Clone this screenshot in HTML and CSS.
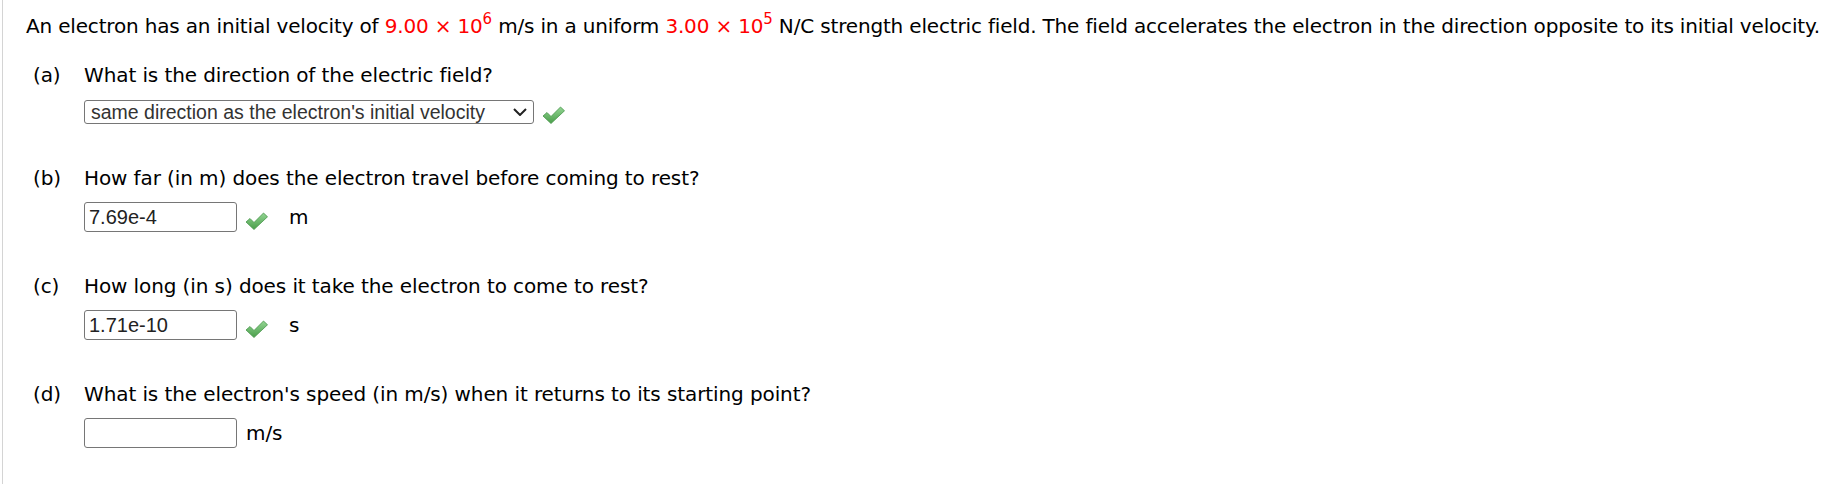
FILE: index.html
```html
<!DOCTYPE html>
<html>
	<head>
	<meta charset="utf-8">
	<link rel="stylesheet" href="styles.css">
	</head>

	<body>
		<div class="question">

			<p class="stem">An electron has an initial velocity of <span class="given">9.00 &times; 10<sup>6</sup></span> m/s in a uniform <span class="given">3.00 &times; 10<sup>5</sup></span> N/C strength electric field. The field accelerates the electron in the direction opposite to its initial velocity.</p>

			<!-- part a -->
			<div class="part part-first">
				<div class="part-label">(a)</div>
				<div class="part-body">
					<p class="prompt">What is the direction of the electric field?</p>
					<div class="answer">
						<span class="dropdown">
							<select name="direction">
								<option>same direction as the electron's initial velocity</option>
								<option>opposite direction to the electron's initial velocity</option>
							</select>
							<svg class="chevron" width="14" height="8" viewBox="0 0 14 8"><path d="M1 1 L7 7 L13 1" fill="none" stroke="#222" stroke-width="2"/></svg>
						</span>
						<svg class="check" width="23" height="18" viewBox="0 0 23 18"><use href="#tick"/></svg>
					</div>
				</div>
			</div>

			<!-- part b -->
			<div class="part">
				<div class="part-label">(b)</div>
				<div class="part-body">
					<p class="prompt">How far (in m) does the electron travel before coming to rest?</p>
					<div class="answer">
						<input type="text" class="field" value="7.69e-4">
						<svg class="check" width="23" height="18" viewBox="0 0 23 18"><use href="#tick"/></svg>
						<span class="unit unit-checked">m</span>
					</div>
				</div>
			</div>

			<!-- part c -->
			<div class="part">
				<div class="part-label">(c)</div>
				<div class="part-body">
					<p class="prompt">How long (in s) does it take the electron to come to rest?</p>
					<div class="answer">
						<input type="text" class="field" value="1.71e-10">
						<svg class="check" width="23" height="18" viewBox="0 0 23 18"><use href="#tick"/></svg>
						<span class="unit unit-checked">s</span>
					</div>
				</div>
			</div>

			<!-- part d -->
			<div class="part">
				<div class="part-label">(d)</div>
				<div class="part-body">
					<p class="prompt">What is the electron's speed (in m/s) when it returns to its starting point?</p>
					<div class="answer">
						<input type="text" class="field" value="">
						<span class="unit">m/s</span>
					</div>
				</div>
			</div>

		</div>

		<svg width="0" height="0" class="defs">
			<defs>
				<linearGradient id="tickFill" x1="0" y1="0" x2="0" y2="1">
					<stop offset="0" stop-color="#93d593"/>
					<stop offset="1" stop-color="#4a9e4a"/>
				</linearGradient>
				<path id="tick" d="M1 10 L5 6.5 L9 10.5 L18.5 1 L22.5 4.8 L9 17.5 Z" fill="url(#tickFill)" stroke="#46964a" stroke-width="0.8" stroke-linejoin="round"/>
			</defs>
		</svg>
	</body>
</html>
```

FILE: styles.css
```css
body, html {
	height: 100%;
	min-height: 100%;
}

body {
	margin: 0;
	padding: 0;
	background: #fff;
}

.question {
	margin-left: 2px;
	min-height: 100%;
	border-left: 1px solid #d4d4d4;
	padding: 14px 0 0 23px;
	font-family: "DejaVu Sans", Verdana, sans-serif;
	font-size: 20px;
	line-height: 24px;
	letter-spacing: -0.1px;
	color: #000;
	box-sizing: border-box;
}

p {
	margin: 0;
	padding: 0;
}

.stem {
	white-space: nowrap;
	letter-spacing: -0.17px;
}

.given {
	color: #f00;
}

sup {
	font-size: 15px;
	line-height: 0;
	vertical-align: 9px;
}

.part {
	display: flex;
	margin: 42px 0 0 7px;
}

.part-first {
	margin-top: 25px;
}

.part-label {
	width: 51px;
	flex-shrink: 0;
}

.prompt {
	margin-bottom: 12px;
}

.answer {
	display: flex;
	align-items: center;
	height: 30px;
}

.part-first .answer {
	height: 25px;
}

.dropdown {
	display: inline-flex;
	align-items: center;
	width: 450px;
	height: 24px;
	border: 1px solid #767676;
	border-radius: 3px;
	box-sizing: border-box;
	background: #fff;
}

.dropdown select {
	flex: 1;
	appearance: none;
	-webkit-appearance: none;
	border: none;
	outline: none;
	background: transparent;
	padding: 0 0 0 6px;
	margin: 0;
	height: 22px;
	font-family: "Liberation Sans", Arial, sans-serif;
	font-size: 19.5px;
	letter-spacing: 0;
	color: #333;
}

.chevron {
	margin-right: 6px;
}

.check {
	margin: 7px 0 0 8px;
	flex-shrink: 0;
}

.field {
	width: 153px;
	height: 30px;
	box-sizing: border-box;
	border: 1px solid #767676;
	border-radius: 3px;
	padding: 0 4px;
	margin: 0;
	font-family: "Liberation Sans", Arial, sans-serif;
	font-size: 20px;
	letter-spacing: 0;
	color: #222;
	outline: none;
}

.unit {
	margin-left: 9px;
}

.unit-checked {
	margin-left: 21px;
}

.defs {
	position: absolute;
}
```
